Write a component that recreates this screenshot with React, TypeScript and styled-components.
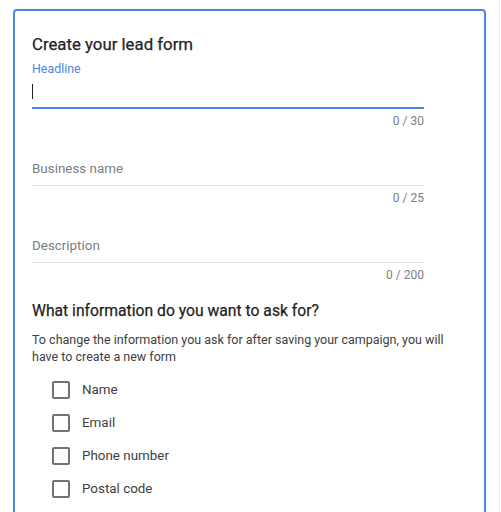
import { FC } from 'react';
import styled, { createGlobalStyle } from 'styled-components';

const GlobalStyle = createGlobalStyle`
  html, body {
    margin: 0;
    padding: 0;
    background: #ffffff;
  }
  body {
    font-family: Roboto, 'Noto Sans', Arial, sans-serif;
    -webkit-font-smoothing: antialiased;
  }
`;

type FieldProps = {
  label: string;
  max: number;
  focused?: boolean;
};

const FormField: FC<FieldProps> = ({ label, max, focused }) => {
  return (
    <Field>
      <FloatLabel>{focused ? label : ''}</FloatLabel>
      <InputBox $focused={focused}>
        {focused ? <Caret /> : <Placeholder>{label}</Placeholder>}
      </InputBox>
      <Counter>0 / {max}</Counter>
    </Field>
  );
};

const options = ['Name', 'Email', 'Phone number', 'Postal code'];

const App: FC = () => {
  return (
    <>
      <GlobalStyle />
      <Page>
        <Card>
          <Title>Create your lead form</Title>
          <FormField label="Headline" max={30} focused />
          <FormField label="Business name" max={25} />
          <FormField label="Description" max={200} />

          <SectionTitle>What information do you want to ask for?</SectionTitle>
          <Note>
            To change the information you ask for after saving your campaign, you will have to create a new form
          </Note>

          <OptionList>
            {options.map((opt) => (
              <OptionRow key={opt}>
                <CheckBox />
                <OptionLabel>{opt}</OptionLabel>
              </OptionRow>
            ))}
          </OptionList>
        </Card>
      </Page>
    </>
  );
};

export default App;

const Page = styled.div`
  box-sizing: border-box;
  width: 500px;
  min-height: 512px;
  padding: 9px 0 0 13px;
  border-right: 1px solid #ececec;
  overflow: hidden;
`;

const Card = styled.div`
  box-sizing: border-box;
  width: 473px;
  border: 2px solid #4a86e8;
  border-radius: 4px;
  padding: 21px 17px 30px 17px;
`;

const Title = styled.h1`
  margin: 0 0 5px;
  font-size: 16.8px;
  line-height: 24px;
  font-weight: 400;
  color: #1f1f1f;
  -webkit-text-stroke: 0.25px #1f1f1f;
`;

const Field = styled.div`
  width: 392px;
  margin-bottom: 9px;
`;

const FloatLabel = styled.div`
  height: 16px;
  font-size: 12.4px;
  line-height: 16px;
  color: #4a86e8;
`;

const InputBox = styled.div<{ $focused?: boolean }>`
  box-sizing: border-box;
  height: 32px;
  display: flex;
  align-items: flex-end;
  padding-bottom: 6px;
  border-bottom: ${(p) => (p.$focused ? '2px solid #4a86e8' : '1px solid #e3e3e3')};
`;

const Caret = styled.span`
  display: block;
  width: 1px;
  height: 15px;
  margin-bottom: 2px;
  background: #202124;
`;

const Placeholder = styled.span`
  font-size: 13.4px;
  line-height: 20px;
  color: #7a7e83;
`;

const Counter = styled.div`
  margin-top: 4px;
  text-align: right;
  font-size: 12px;
  line-height: 16px;
  color: #7a7e83;
`;

const SectionTitle = styled.h2`
  margin: 16px 0 8px;
  font-size: 15.7px;
  line-height: 24px;
  font-weight: 400;
  color: #1f1f1f;
  -webkit-text-stroke: 0.25px #1f1f1f;
`;

const Note = styled.p`
  max-width: 425px;
  margin: 0;
  font-size: 12.5px;
  line-height: 17px;
  color: #3c4043;
`;

const OptionList = styled.div`
  margin-top: 8px;
  padding-left: 20px;
`;

const OptionRow = styled.div`
  display: flex;
  align-items: center;
  height: 33px;
  gap: 12px;
`;

const CheckBox = styled.span`
  box-sizing: border-box;
  width: 18px;
  height: 18px;
  border: 2px solid #6f7378;
  border-radius: 2px;
`;

const OptionLabel = styled.span`
  font-size: 13.4px;
  line-height: 20px;
  color: #3c4043;
`;
